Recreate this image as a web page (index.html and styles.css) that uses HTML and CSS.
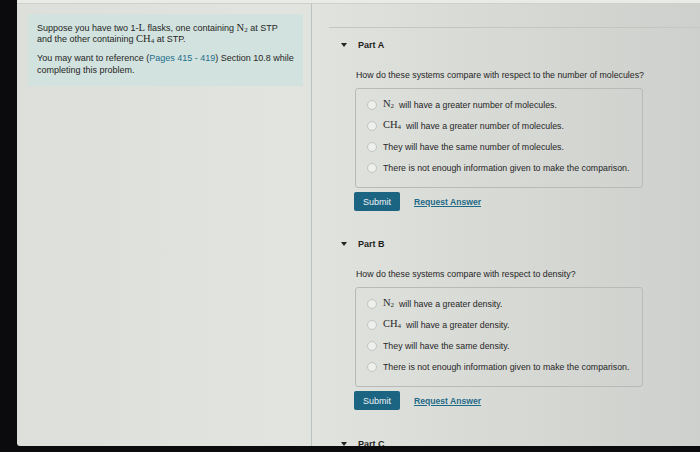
FILE: index.html
```html
<!DOCTYPE html>
<html>
<head>
<meta charset="utf-8">
<link rel="stylesheet" href="styles.css">
</head>
<body>
<div class="frame">
  <div class="screen">
    <div class="left">
      <div class="info">
        <p>Suppose you have two 1-<span class="chem">L</span> flasks, one containing <span class="chem">N<sub>2</sub></span> at STP<br>and the other containing <span class="chem">CH<sub>4</sub></span> at STP.</p>
        <p class="note">You may want to reference (<span class="ref">Pages 415 - 419</span>) Section 10.8 while completing this problem.</p>
      </div>
    </div>
    <div class="right">
      <div class="part first">
        <div class="part-head"><span class="tri"></span><span class="part-title">Part A</span></div>
        <div class="question">How do these systems compare with respect to the number of molecules?</div>
        <div class="options">
          <div class="opt"><span class="radio"></span><span class="chem">N<sub>2</sub></span>&nbsp; will have a greater number of molecules.</div>
          <div class="opt"><span class="radio"></span><span class="chem">CH<sub>4</sub></span>&nbsp; will have a greater number of molecules.</div>
          <div class="opt"><span class="radio"></span>They will have the same number of molecules.</div>
          <div class="opt"><span class="radio"></span>There is not enough information given to make the comparison.</div>
        </div>
        <div class="actions"><span class="submit">Submit</span><span class="request">Request Answer</span></div>
      </div>
      <div class="part">
        <div class="part-head"><span class="tri"></span><span class="part-title">Part B</span></div>
        <div class="question">How do these systems compare with respect to density?</div>
        <div class="options">
          <div class="opt"><span class="radio"></span><span class="chem">N<sub>2</sub></span>&nbsp; will have a greater density.</div>
          <div class="opt"><span class="radio"></span><span class="chem">CH<sub>4</sub></span>&nbsp; will have a greater density.</div>
          <div class="opt"><span class="radio"></span>They will have the same density.</div>
          <div class="opt"><span class="radio"></span>There is not enough information given to make the comparison.</div>
        </div>
        <div class="actions"><span class="submit">Submit</span><span class="request">Request Answer</span></div>
      </div>
      <div class="part">
        <div class="part-head"><span class="tri"></span><span class="part-title">Part C</span></div>
      </div>
    </div>
  </div>
</div>
</body>
</html>
```
FILE: styles.css
```css
html, body {
  margin: 0;
  padding: 0;
  background: #0b0b0d;
}
.frame {
  width: 700px;
  height: 452px;
  overflow: hidden;
  background: #0b0b0d;
}
.screen {
  margin-left: 17px;
  width: 683px;
  height: 446px;
  overflow: hidden;
  display: flex;
  background: linear-gradient(90deg, #dcdfda 0%, #e2e4df 40%, #d9dbd7 65%, #cdd0cc 100%);
  border-top: 3px solid #e9ebe7;
  box-sizing: border-box;
  border-bottom-left-radius: 3px;
  font-family: "Liberation Sans", Arial, sans-serif;
  font-size: 8.8px;
  color: #262626;
}
.left {
  width: 295px;
  flex: none;
  border-right: 1px solid #b9c4c2;
  border-top: 1px solid #cdd0cb;
  box-sizing: border-box;
  padding: 10px 8px 0 11px;
}
.info {
  background: #d2e2de;
  padding: 9px 4px 10px 9px;
  height: 72px;
  box-sizing: border-box;
  font-size: 9px;
}
.info p {
  margin: 0;
  line-height: 11px;
}
.info p.note {
  margin-top: 7px;
  line-height: 12px;
}
.chem {
  font-family: "Liberation Serif", "Times New Roman", serif;
  font-size: 10.5px;
  line-height: 1;
}
.chem sub {
  font-size: 7px;
  vertical-align: -1px;
  line-height: 0;
}
.ref {
  color: #1e6f8f;
}
.right {
  flex: 1;
  border-top: 1px solid #cdd0cb;
  padding: 23px 0 0 0;
  box-sizing: border-box;
}
.part {
  padding-left: 29px;
  height: 200px;
  box-sizing: border-box;
}
.part.first {
  border-top: 1px solid #c3c6c1;
  margin-left: 17px;
  padding-left: 12px;
}
.part-head {
  height: 34px;
  display: flex;
  align-items: center;
  font-size: 9px;
  font-weight: bold;
  color: #1e1e1e;
}
.tri {
  width: 0;
  height: 0;
  border-left: 3px solid transparent;
  border-right: 3px solid transparent;
  border-top: 4px solid #222;
  margin-right: 11px;
}
.question {
  margin: 7px 0 0 15px;
  line-height: 12px;
}
.options {
  margin: 7px 0 0 14px;
  width: 288px;
  height: 100px;
  box-sizing: border-box;
  border: 1px solid #b7bab6;
  border-radius: 3px;
  padding: 5px 0 8px 11px;
}
.opt {
  height: 21px;
  display: flex;
  align-items: center;
  white-space: nowrap;
}
.radio {
  width: 8px;
  height: 8px;
  border: 1px solid #c2c5c2;
  border-radius: 50%;
  background: #eef0ed;
  margin-right: 6px;
  flex: none;
}
.actions {
  margin: 4px 0 0 13px;
  display: flex;
  align-items: center;
}
.submit {
  width: 46px;
  height: 19px;
  display: flex;
  align-items: center;
  justify-content: center;
  background: #1b6482;
  color: #eef3f5;
  border-radius: 2px;
  font-size: 9px;
}
.request {
  margin-left: 14px;
  color: #1d6a87;
  font-weight: bold;
  text-decoration: underline;
  font-size: 8.6px;
}
```
